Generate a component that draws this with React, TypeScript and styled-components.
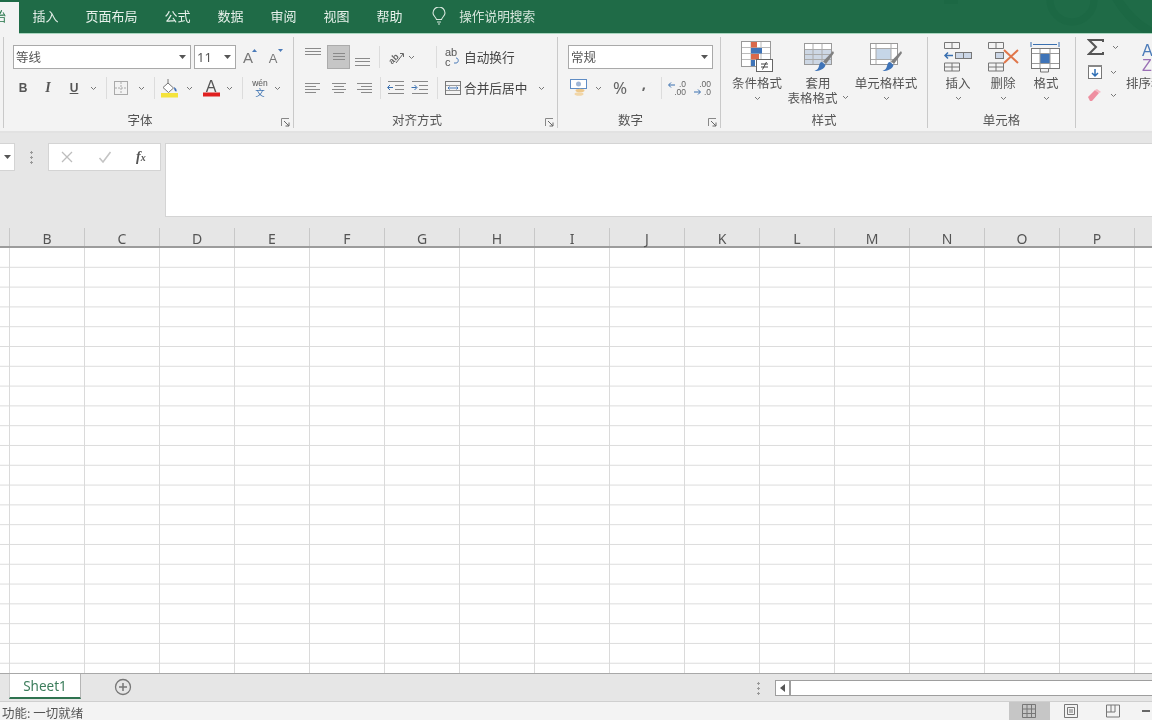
import React from 'react';
import styled, { createGlobalStyle } from 'styled-components';

const GlobalStyle = createGlobalStyle`
    html, body {
        margin: 0;
        padding: 0;
        background: #f3f3f3;
        overflow: hidden;
    }
    * {
        box-sizing: border-box;
    }
`;

const COLUMNS = ['B', 'C', 'D', 'E', 'F', 'G', 'H', 'I', 'J', 'K', 'L', 'M', 'N', 'O', 'P', 'Q'];
const TABS = ['插入', '页面布局', '公式', '数据', '审阅', '视图', '帮助'];

const Chevron = () => (
    <svg width="7" height="5" viewBox="0 0 7 5">
        <path d="M1 1l2.5 2.5L6 1" fill="none" stroke="#777" strokeWidth="1" />
    </svg>
);

const DropArrow = () => (
    <svg width="7" height="4" viewBox="0 0 7 4">
        <path d="M0 0h7L3.5 4z" fill="#555" />
    </svg>
);

const Launcher = () => (
    <svg width="10" height="10" viewBox="0 0 10 10">
        <path d="M.5 8V.5H8" fill="none" stroke="#888" />
        <path d="M3 3l5 5M8 4.500V8H4.500" fill="none" stroke="#666" />
    </svg>
);

const AlignLines = ({ rows }: { rows: Array<[number, number, number]> }) => (
    <svg width="18" height="24" viewBox="0 0 18 24">
        {rows.map(([y, x1, x2], i) => (
            <path key={i} d={`M${x1} ${y}.5H${x2}`} stroke="#8a8a8a" />
        ))}
    </svg>
);

const BorderIcon = () => (
    <svg width="16" height="16" viewBox="0 0 16 16">
        <rect x="1.500" y="1.500" width="13" height="13" fill="none" stroke="#aaa" />
        <path d="M8 2v12M2 8h12" stroke="#aaa" strokeDasharray="2 1" />
    </svg>
);

const FillIcon = () => (
    <svg width="20" height="20" viewBox="0 0 20 20">
        <path d="M8 1v5M8 5l5.500 5-5 4.500L3 9.500z" fill="#fff" stroke="#777" />
        <path d="M14 9c2 1 3 3 2.500 4.500-1 .5-2.500-1-2.500-4.500z" fill="#3f6fb5" />
        <rect x="1" y="15" width="17" height="4.500" fill="#f4e33c" />
    </svg>
);

const FontColorIcon = () => (
    <svg width="20" height="20" viewBox="0 0 20 20">
        <text x="10" y="14" textAnchor="middle" fontSize="16" fontFamily="Liberation Sans" fill="#555">A</text>
        <rect x="2" y="14.500" width="17" height="4" fill="#e02020" />
    </svg>
);

const WenIcon = () => (
    <svg width="20" height="20" viewBox="0 0 20 20">
        <text x="10" y="8" textAnchor="middle" fontSize="8.500" fontFamily="Liberation Sans" fill="#555">wén</text>
        <text x="10" y="18" textAnchor="middle" fontSize="9.500" fontFamily="Noto Sans CJK SC" fill="#3a70b0">文</text>
    </svg>
);

const GrowIcon = ({ up }: { up: boolean }) => (
    <svg width="18" height="18" viewBox="0 0 18 18">
        <text x="7" y="15" textAnchor="middle" fontSize={up ? 15 : 13} fontFamily="Liberation Sans" fill="#777">A</text>
        {up ? <path d="M11 4l2.500-3L16 4z" fill="#4a7ab8" /> : <path d="M12 1h5l-2.500 3z" fill="#4a7ab8" />}
    </svg>
);

const OrientIcon = () => (
    <svg width="18" height="18" viewBox="0 0 18 18">
        <text x="1" y="15" fontSize="9" fontFamily="Liberation Sans" fontWeight="700" fill="#666" transform="rotate(-45 5 11)">ab</text>
        <path d="M9 15L16 6M13 5.500h3.500V9" fill="none" stroke="#666" />
    </svg>
);

const WrapIcon = () => (
    <svg width="18" height="20" viewBox="0 0 18 20">
        <text x="1" y="9" fontSize="11" fontFamily="Liberation Sans" fill="#555">ab</text>
        <text x="1" y="19" fontSize="11" fontFamily="Liberation Sans" fill="#555">c</text>
        <path d="M12 11c3 0 3 5 0 5h-2" fill="none" stroke="#4a7ab8" />
    </svg>
);

const IndentIcon = ({ out }: { out: boolean }) => (
    <svg width="20" height="16" viewBox="0 0 20 16">
        <path d="M2 1.500h16M9 5.500h9M9 9.500h9M2 13.500h16" stroke="#888" />
        {out ? (
            <path d="M7 7.500H2M4 5L1.500 7.500 4 10" fill="none" stroke="#3a70b0" />
        ) : (
            <path d="M1.500 7.500h5M4.500 5L7 7.500 4.500 10" fill="none" stroke="#3a70b0" />
        )}
    </svg>
);

const MergeIcon = () => (
    <svg width="18" height="16" viewBox="0 0 18 16">
        <rect x="1.500" y="1.500" width="15" height="13" fill="none" stroke="#777" />
        <path d="M2 5.500h14M2 10.500h14" stroke="#999" />
        <path d="M4 8h10M5.500 6.500L4 8l1.500 1.500M12.500 6.500L14 8l-1.500 1.500" fill="none" stroke="#4a7ab8" />
    </svg>
);

const CurrencyIcon = () => (
    <svg width="20" height="20" viewBox="0 0 20 20">
        <rect x="1.500" y="1.500" width="16" height="9" fill="#fff" stroke="#5f8cc4" />
        <circle cx="9.500" cy="6" r="2.500" fill="#9fb6d6" />
        <ellipse cx="11" cy="12.500" rx="4.500" ry="1.800" fill="#eec88a" />
        <ellipse cx="10" cy="16" rx="4.500" ry="1.800" fill="#f1d6a8" />
    </svg>
);

const DecimalIcon = ({ inc }: { inc: boolean }) => (
    <svg width="20" height="18" viewBox="0 0 20 18">
        <text x="19" y="8" textAnchor="end" fontSize="8.500" fontFamily="Liberation Sans" fill="#666">{inc ? '.0' : '.00'}</text>
        <text x="19" y="16" textAnchor="end" fontSize="8.500" fontFamily="Liberation Sans" fill="#666">{inc ? '.00' : '.0'}</text>
        {inc ? (
            <path d="M8 6H2M4 3.500L1.500 6 4 8.500" fill="none" stroke="#3a70b0" />
        ) : (
            <path d="M2 13h6M6 10.500L8.500 13 6 15.500" fill="none" stroke="#3a70b0" />
        )}
    </svg>
);

const SigmaIcon = () => (
    <svg width="18" height="18" viewBox="0 0 18 18">
        <path d="M16 4V2H2l7 7-7 7h14v-2" fill="none" stroke="#555" strokeWidth="2" />
    </svg>
);

const FillDownIcon = () => (
    <svg width="16" height="16" viewBox="0 0 16 16">
        <rect x="1.500" y="1.500" width="13" height="13" fill="#fff" stroke="#777" />
        <rect x="1" y="1" width="14" height="2" fill="#888" />
        <path d="M8 5v7M5 9l3 3 3-3" fill="none" stroke="#2f6fb5" strokeWidth="1.500" />
    </svg>
);

const EraserIcon = () => (
    <svg width="16" height="14" viewBox="0 0 16 14">
        <path d="M1 9l7-7 4 3-7 8H3z" fill="#ee8fa0" />
        <path d="M8 2l2-1 4 3-2 1z" fill="#f4b8c2" />
    </svg>
);

const Brush = () => (
    <g>
        <path d="M31 10l1 2-8 11-3-2.500z" fill="#808080" />
        <path d="M20 21l3.500 3c-1 4-6 6-11 6 3-1 4-3 4.500-5 .5-2 1-4 3-4z" fill="#3f74b8" />
    </g>
);

const CondFormatIcon = () => (
    <svg width="32" height="32" viewBox="0 0 32 32">
        <rect x=".5" y=".5" width="29" height="25" fill="#fff" stroke="#999" />
        <path d="M10 1v24M20 1v24M1 6.500h28M1 12.500h28M1 18.500h28" stroke="#bbb" />
        <rect x="10" y="1" width="6" height="5.500" fill="#d9694a" />
        <rect x="10" y="7" width="11" height="5.500" fill="#3f74b8" />
        <rect x="10" y="13" width="8" height="5.500" fill="#d9694a" />
        <rect x="10" y="19" width="4" height="6" fill="#3f74b8" />
        <rect x="15.500" y="18.500" width="16" height="12" fill="#fff" stroke="#666" />
        <path d="M20 23h7M20 26h7M25.500 21l-4 7.500" fill="none" stroke="#444" />
    </svg>
);

const TableFormatIcon = () => (
    <svg width="32" height="32" viewBox="0 0 32 32">
        <rect x="2.500" y="2.500" width="27" height="21" fill="#fff" stroke="#999" />
        <rect x="3" y="8" width="26" height="15" fill="#cdd7e4" />
        <path d="M11 3v20M20 3v20M3 8.500h26M3 13.500h26M3 18.500h26" stroke="#aaa" />
        <Brush />
    </svg>
);

const CellStyleIcon = () => (
    <svg width="32" height="32" viewBox="0 0 32 32">
        <rect x=".5" y="2.500" width="27" height="21" fill="#fff" stroke="#999" />
        <rect x="6" y="7" width="15" height="12" fill="#c6d6e8" />
        <path d="M6 3v20M21 3v20M1 7.500h26M1 18.500h26" stroke="#aaa" />
        <Brush />
    </svg>
);

const InsertCellIcon = () => (
    <svg width="32" height="32" viewBox="0 0 32 32">
        <path d="M2.500 1.500h15v6h-15zM10 2v5M2.500 22h15v8h-15zM10 22v8M3 26h14" fill="none" stroke="#777" />
        <rect x="13.500" y="11.500" width="16" height="6" fill="#cbd6e6" stroke="#777" />
        <path d="M21.500 12v5" stroke="#777" />
        <path d="M11 14.500H3M6 11.500l-3 3 3 3" fill="none" stroke="#3a70b0" strokeWidth="1.500" />
    </svg>
);

const DeleteCellIcon = () => (
    <svg width="32" height="32" viewBox="0 0 32 32">
        <path d="M1.500 1.500h15v6h-15zM9 2v5M1.500 22h15v8h-15zM9 22v8M2 26h14" fill="none" stroke="#777" />
        <rect x="8.500" y="11.500" width="8" height="6" fill="#cbd6e6" stroke="#777" />
        <path d="M17 9l14 13M31 9L17 22" stroke="#e0764a" strokeWidth="2" />
    </svg>
);

const FormatCellIcon = () => (
    <svg width="32" height="32" viewBox="0 0 32 32">
        <path d="M1 1v5M29 1v5M3 3.500h24" fill="none" stroke="#3a70b0" />
        <rect x="1.500" y="7.500" width="28" height="20" fill="#fff" stroke="#777" />
        <rect x="10" y="12" width="10" height="11" fill="#3f74b8" />
        <path d="M10 8v19M20 8v19M2 12.500h27M2 22.500h27" stroke="#999" />
        <path d="M10.500 28v3h8v-3" fill="none" stroke="#777" />
    </svg>
);

const SortIcon = () => (
    <svg width="24" height="32" viewBox="0 0 24 32">
        <text x="0" y="15" fontSize="16" fontFamily="Liberation Sans" fill="#4a7ab8">A</text>
        <text x="0" y="30" fontSize="16" fontFamily="Liberation Sans" fill="#9a6fb5">Z</text>
    </svg>
);

const BulbIcon = () => (
    <svg width="14" height="18" viewBox="0 0 14 18">
        <path d="M4.500 12.500C4 10 1 9 1 6a6 6 0 0112 0c0 3-3 4-3.500 6.500zM5 15h4M6 17h2" fill="none" stroke="#d8e8de" strokeWidth="1.100" />
    </svg>
);

const Watermark = () => (
    <WatermarkSvg width="240" height="33" viewBox="0 0 240 33">
        <circle cx="160" cy="0" r="22" fill="none" stroke="#1c6844" strokeWidth="7" />
        <path d="M200 -10c10 20 25 35 40 43" fill="none" stroke="#1c6844" strokeWidth="9" />
        <rect x="32" y="-4" width="14" height="8" fill="#1c6844" />
    </WatermarkSvg>
);

const App = () => {
    return (
        <Page>
            <GlobalStyle />

            <TopBar>
                <ActiveTab>开始</ActiveTab>
                {TABS.map((tab) => (
                    <TopTab key={tab}>{tab}</TopTab>
                ))}
                <SearchHint>
                    <BulbIcon />
                    <span>操作说明搜索</span>
                </SearchHint>
                <Watermark />
            </TopBar>

            <Ribbon>
                <LeftEdge />

                <Group $w={290}>
                    <GroupBody $pl={9}>
                        <ToolRow>
                            <SelectBox $w={178}>
                                等线
                                <DropArrow />
                            </SelectBox>
                            <SelectBox $w={42} $ml={3}>
                                <SizeText>11</SizeText>
                                <DropArrow />
                            </SelectBox>
                            <Slot $w={20} $ml={4}>
                                <GrowIcon up />
                            </Slot>
                            <Slot $w={20} $ml={5}>
                                <GrowIcon up={false} />
                            </Slot>
                        </ToolRow>
                        <ToolRow>
                            <Slot $w={20}>
                                <BoldGlyph>B</BoldGlyph>
                            </Slot>
                            <Slot $w={20} $ml={5}>
                                <ItalicGlyph>I</ItalicGlyph>
                            </Slot>
                            <Slot $w={20} $ml={6}>
                                <UnderGlyph>U</UnderGlyph>
                            </Slot>
                            <Slot $w={10} $ml={4}>
                                <Chevron />
                            </Slot>
                            <RowDivider $ml={8} />
                            <Slot $w={20} $ml={4}>
                                <BorderIcon />
                            </Slot>
                            <Slot $w={10} $ml={5}>
                                <Chevron />
                            </Slot>
                            <RowDivider $ml={8} />
                            <Slot $w={20} $ml={5}>
                                <FillIcon />
                            </Slot>
                            <Slot $w={10} $ml={4}>
                                <Chevron />
                            </Slot>
                            <Slot $w={20} $ml={7}>
                                <FontColorIcon />
                            </Slot>
                            <Slot $w={10} $ml={3}>
                                <Chevron />
                            </Slot>
                            <RowDivider $ml={8} />
                            <Slot $w={20} $ml={7}>
                                <WenIcon />
                            </Slot>
                            <Slot $w={10} $ml={2}>
                                <Chevron />
                            </Slot>
                        </ToolRow>
                    </GroupBody>
                    <GroupLabel $pr={17}>字体</GroupLabel>
                    <LauncherSpot>
                        <Launcher />
                    </LauncherSpot>
                </Group>

                <Group $w={264}>
                    <GroupBody $pl={10}>
                        <ToolRow>
                            <Slot $w={18}>
                                <AlignLines rows={[[3, 1, 17], [6, 1, 17], [9, 1, 17]]} />
                            </Slot>
                            <ActiveSlot $ml={5}>
                                <AlignLines rows={[[8, 3, 15], [11, 3, 15], [14, 3, 15]]} />
                            </ActiveSlot>
                            <Slot $w={18} $ml={4}>
                                <AlignLines rows={[[13, 1, 16], [16, 1, 16], [20, 1, 16]]} />
                            </Slot>
                            <RowDivider $ml={7} />
                            <Slot $w={18} $ml={7}>
                                <OrientIcon />
                            </Slot>
                            <Slot $w={10} $ml={1}>
                                <Chevron />
                            </Slot>
                            <RowDivider $ml={20} />
                            <Slot $w={18} $ml={7}>
                                <WrapIcon />
                            </Slot>
                            <ToolText $ml={2}>自动换行</ToolText>
                        </ToolRow>
                        <ToolRow>
                            <Slot $w={18}>
                                <AlignLines rows={[[7, 1, 16], [10, 1, 12], [13, 1, 16], [16, 1, 12]]} />
                            </Slot>
                            <Slot $w={18} $ml={8}>
                                <AlignLines rows={[[7, 2, 16], [10, 4, 14], [13, 2, 16], [16, 4, 14]]} />
                            </Slot>
                            <Slot $w={18} $ml={7}>
                                <AlignLines rows={[[7, 2, 17], [10, 6, 17], [13, 2, 17], [16, 6, 17]]} />
                            </Slot>
                            <RowDivider $ml={7} />
                            <Slot $w={20} $ml={5}>
                                <IndentIcon out />
                            </Slot>
                            <Slot $w={20} $ml={4}>
                                <IndentIcon out={false} />
                            </Slot>
                            <RowDivider $ml={7} />
                            <Slot $w={18} $ml={6}>
                                <MergeIcon />
                            </Slot>
                            <ToolText $ml={2}>合并后居中</ToolText>
                            <Slot $w={10} $ml={9}>
                                <Chevron />
                            </Slot>
                        </ToolRow>
                    </GroupBody>
                    <GroupLabel $pr={17}>对齐方式</GroupLabel>
                    <LauncherSpot>
                        <Launcher />
                    </LauncherSpot>
                </Group>

                <Group $w={163}>
                    <GroupBody $pl={10}>
                        <ToolRow>
                            <SelectBox $w={145}>
                                常规
                                <DropArrow />
                            </SelectBox>
                        </ToolRow>
                        <ToolRow>
                            <Slot $w={20} $ml={1}>
                                <CurrencyIcon />
                            </Slot>
                            <Slot $w={10} $ml={4}>
                                <Chevron />
                            </Slot>
                            <PercentGlyph $ml={7}>%</PercentGlyph>
                            <CommaGlyph $ml={4}>,</CommaGlyph>
                            <RowDivider $ml={7} />
                            <Slot $w={20} $ml={5}>
                                <DecimalIcon inc />
                            </Slot>
                            <Slot $w={20} $ml={5}>
                                <DecimalIcon inc={false} />
                            </Slot>
                        </ToolRow>
                    </GroupBody>
                    <GroupLabel $pr={17}>数字</GroupLabel>
                    <LauncherSpot>
                        <Launcher />
                    </LauncherSpot>
                </Group>

                <Group $w={207}>
                    <BigRow $pl={5}>
                        <BigButton $w={62}>
                            <CondFormatIcon />
                            <BigText>条件格式</BigText>
                            <Chevron />
                        </BigButton>
                        <BigButton $w={60}>
                            <TableFormatIcon />
                            <BigText>套用</BigText>
                            <BigText>
                                表格格式 <Chevron />
                            </BigText>
                        </BigButton>
                        <BigButton $w={76}>
                            <CellStyleIcon />
                            <BigText>单元格样式</BigText>
                            <Chevron />
                        </BigButton>
                    </BigRow>
                    <GroupLabel>样式</GroupLabel>
                </Group>

                <Group $w={148}>
                    <BigRow $pl={8}>
                        <BigButton $w={44}>
                            <InsertCellIcon />
                            <BigText>插入</BigText>
                            <Chevron />
                        </BigButton>
                        <BigButton $w={46}>
                            <DeleteCellIcon />
                            <BigText>删除</BigText>
                            <Chevron />
                        </BigButton>
                        <BigButton $w={40}>
                            <FormatCellIcon />
                            <BigText>格式</BigText>
                            <Chevron />
                        </BigButton>
                    </BigRow>
                    <GroupLabel>单元格</GroupLabel>
                </Group>

                <EditGroup>
                    <EditStack>
                        <EditRow>
                            <SigmaIcon />
                            <Chevron />
                        </EditRow>
                        <EditRow>
                            <FillDownIcon />
                            <Chevron />
                        </EditRow>
                        <EditRow>
                            <EraserIcon />
                            <Chevron />
                        </EditRow>
                    </EditStack>
                    <SortButton>
                        <SortIcon />
                        <BigText>排序和筛选</BigText>
                    </SortButton>
                </EditGroup>
            </Ribbon>

            <FormulaBar>
                <NameBox>
                    <DropArrow />
                </NameBox>
                <GripDots />
                <FormulaTools>
                    <svg width="14" height="14" viewBox="0 0 14 14">
                        <path d="M2 2l10 10M12 2L2 12" stroke="#bdbdbd" strokeWidth="1.300" />
                    </svg>
                    <svg width="14" height="14" viewBox="0 0 14 14">
                        <path d="M1.500 8l3.500 4 7.500-10" fill="none" stroke="#c4c4c4" strokeWidth="1.600" />
                    </svg>
                    <FxGlyph>
                        f<sub>x</sub>
                    </FxGlyph>
                </FormulaTools>
                <FormulaInput />
            </FormulaBar>

            <ColumnHeader>
                <Corner />
                {COLUMNS.map((col) => (
                    <ColumnCell key={col}>{col}</ColumnCell>
                ))}
            </ColumnHeader>

            <SheetGrid />

            <TabBar>
                <SheetTab>Sheet1</SheetTab>
                <AddSheet>
                    <svg width="18" height="18" viewBox="0 0 18 18">
                        <circle cx="9" cy="9" r="7.500" fill="none" stroke="#777" strokeWidth="1.300" />
                        <path d="M5 9h8M9 5v8" stroke="#777" strokeWidth="1.500" />
                    </svg>
                </AddSheet>
                <TabSpacer />
                <GripDots />
                <ScrollTrack>
                    <ScrollButton>
                        <svg width="6" height="8" viewBox="0 0 6 8">
                            <path d="M5 0v8L0 4z" fill="#555" />
                        </svg>
                    </ScrollButton>
                </ScrollTrack>
            </TabBar>

            <StatusBar>
                <StatusText>功能: 一切就绪</StatusText>
                <ViewButton $active>
                    <svg width="14" height="14" viewBox="0 0 14 14">
                        <path d="M.5.500h13v13H.5zM5 1v12M9.500 1v12M1 5h12M1 9.500h12" fill="none" stroke="#777" />
                    </svg>
                </ViewButton>
                <ViewButton>
                    <svg width="14" height="14" viewBox="0 0 14 14">
                        <path d="M.5.500h13v13H.5zM3.500 3.500h7v7h-7zM5 6h4M5 8h4" fill="none" stroke="#777" />
                    </svg>
                </ViewButton>
                <ViewButton>
                    <svg width="14" height="14" viewBox="0 0 14 14">
                        <path d="M.5 1h13v12H.5zM5 1v7h4V1M5 8H1" fill="none" stroke="#777" />
                    </svg>
                </ViewButton>
                <ZoomMinus />
            </StatusBar>
        </Page>
    );
};

export default App;

const Page = styled.div`
    width: 1152px;
    height: 720px;
    display: flex;
    flex-direction: column;
    overflow: hidden;
    background: #f3f3f3;
    color: #444;
    font-family: 'Noto Sans CJK SC', 'Noto Sans', sans-serif;
    font-size: 12.5px;
    filter: blur(0.35px);
`;

const TopBar = styled.div`
    position: relative;
    height: 34px;
    flex: none;
    display: flex;
    align-items: flex-end;
    background: #1f6b47;
    border-bottom: 1px solid #a9d6bf;
`;

const TopTab = styled.div`
    height: 31px;
    padding: 0 13.5px 3px;
    display: flex;
    align-items: center;
    color: #e6f0ea;
    font-size: 13px;
    line-height: 16px;
    white-space: nowrap;
`;

const ActiveTab = styled(TopTab)`
    margin-left: -33px;
    margin-bottom: -1px;
    height: 32px;
    padding: 0 13px 4px;
    background: #f3f3f3;
    color: #217346;
`;

const SearchHint = styled(TopTab)`
    margin-left: 7px;
    gap: 13px;
    padding: 0 0 3px 9px;
    font-size: 12.7px;
    color: #d6e6dc;
`;

const WatermarkSvg = styled.svg`
    position: absolute;
    top: 0;
    right: 0;
`;

const Ribbon = styled.div`
    height: 97px;
    flex: none;
    display: flex;
    background: #f3f3f3;
`;

const LeftEdge = styled.div`
    width: 4px;
    flex: none;
    margin: 3px 0;
    border-right: 1px solid #c9c9c9;
`;

const Group = styled.div<{ $w: number }>`
    position: relative;
    width: ${(p) => p.$w}px;
    flex: none;
    display: flex;
    flex-direction: column;
    margin: 3px 0;
    border-right: 1px solid #c9c9c9;
`;

const GroupBody = styled.div<{ $pl: number }>`
    flex: 1;
    display: flex;
    flex-direction: column;
    gap: 7px;
    padding: 8px 0 0 ${(p) => p.$pl}px;
`;

const BigRow = styled.div<{ $pl: number }>`
    flex: 1;
    display: flex;
    padding: 4px 0 0 ${(p) => p.$pl}px;
`;

const GroupLabel = styled.div<{ $pr?: number }>`
    height: 17px;
    padding-right: ${(p) => p.$pr || 0}px;
    text-align: center;
    font-size: 12.5px;
    line-height: 17px;
    color: #555;
`;

const LauncherSpot = styled.div`
    position: absolute;
    right: 2px;
    bottom: 0;
    display: flex;
`;

const ToolRow = styled.div`
    height: 24px;
    display: flex;
    align-items: center;
`;

const Slot = styled.div<{ $w: number; $ml?: number }>`
    width: ${(p) => p.$w}px;
    height: 24px;
    flex: none;
    margin-left: ${(p) => p.$ml || 0}px;
    display: flex;
    align-items: center;
    justify-content: center;
`;

const ActiveSlot = styled.div<{ $ml: number }>`
    width: 23px;
    height: 24px;
    flex: none;
    margin-left: ${(p) => p.$ml}px;
    display: flex;
    align-items: center;
    justify-content: center;
    background: #c6c6c6;
    border: 1px solid #ababab;
`;

const SelectBox = styled.div<{ $w: number; $ml?: number }>`
    width: ${(p) => p.$w}px;
    height: 24px;
    flex: none;
    margin-left: ${(p) => p.$ml || 0}px;
    padding: 0 4px 0 2px;
    display: flex;
    align-items: center;
    justify-content: space-between;
    background: #fff;
    border: 1px solid #a9a9a9;
    color: #555;
    font-size: 12.5px;
    line-height: 16px;
`;

const SizeText = styled.span`
    font-family: 'Noto Sans', sans-serif;
    font-size: 13px;
`;

const RowDivider = styled.div<{ $ml: number }>`
    width: 1px;
    height: 22px;
    flex: none;
    margin-left: ${(p) => p.$ml}px;
    background: #dcdcdc;
`;

const BoldGlyph = styled.span`
    font-family: 'Liberation Sans', sans-serif;
    font-size: 12px;
    font-weight: 700;
    color: #555;
`;

const ItalicGlyph = styled(BoldGlyph)`
    font-family: 'Liberation Serif', serif;
    font-size: 14px;
    font-style: italic;
`;

const UnderGlyph = styled(BoldGlyph)`
    text-decoration: underline;
`;

const ToolText = styled.span<{ $ml: number }>`
    margin-left: ${(p) => p.$ml}px;
    font-size: 12.7px;
    line-height: 16px;
    white-space: nowrap;
`;

const PercentGlyph = styled.span<{ $ml: number }>`
    width: 20px;
    flex: none;
    margin-left: ${(p) => p.$ml}px;
    text-align: center;
    font-family: 'Noto Sans', sans-serif;
    font-size: 17px;
    line-height: 20px;
    color: #666;
`;

const CommaGlyph = styled(PercentGlyph)`
    padding-bottom: 10px;
    font-weight: 700;
    font-size: 15px;
`;

const BigButton = styled.div<{ $w: number }>`
    width: ${(p) => p.$w}px;
    flex: none;
    display: flex;
    flex-direction: column;
    align-items: center;
`;

const BigText = styled.div`
    height: 15px;
    display: flex;
    align-items: center;
    gap: 4px;
    font-size: 12.5px;
    line-height: 15px;
    white-space: nowrap;
    color: #555;

    & + svg {
        margin-top: 6px;
    }
    svg + & {
        margin-top: 2px;
    }
`;

const EditGroup = styled.div`
    flex: none;
    display: flex;
    padding-top: 3px;
`;

const EditStack = styled.div`
    width: 50px;
    padding: 1px 0 0 11px;
    display: flex;
    flex-direction: column;
    gap: 5px;
`;

const EditRow = styled.div`
    height: 18px;
    display: flex;
    align-items: center;
    gap: 7px;

    &:first-child {
        margin-bottom: 2px;
    }
`;

const SortButton = styled.div`
    margin-top: 4px;
    display: flex;
    flex-direction: column;
    align-items: flex-start;

    & > svg {
        margin-left: 16px;
    }
`;

const FormulaBar = styled.div`
    height: 97px;
    flex: none;
    display: flex;
    align-items: flex-start;
    padding-top: 10px;
    background: #e6e6e6;
    border-top: 2px solid #e2e2e2;
`;

const NameBox = styled.div`
    width: 15px;
    height: 28px;
    flex: none;
    display: flex;
    align-items: center;
    justify-content: center;
    background: #fff;
    border: 1px solid #d4d4d4;
    border-left: none;
`;

const GripDots = styled.div`
    width: 33px;
    height: 14px;
    flex: none;
    margin-top: 7px;
    background-image: radial-gradient(circle at center, #999 1px, transparent 1.300px);
    background-size: 33px 5px;
`;

const FormulaTools = styled.div`
    width: 113px;
    height: 28px;
    flex: none;
    display: flex;
    align-items: center;
    gap: 24px;
    padding: 0 11px;
    background: #fff;
    border: 1px solid #d4d4d4;
`;

const FxGlyph = styled.span`
    font-family: 'Liberation Serif', serif;
    font-style: italic;
    font-weight: 700;
    font-size: 14px;
    color: #555;

    sub {
        font-size: 10px;
        vertical-align: baseline;
    }
`;

const FormulaInput = styled.div`
    flex: 1;
    height: 74px;
    margin-left: 4px;
    background: #fff;
    border: 1px solid #d4d4d4;
    border-right: none;
`;

const ColumnHeader = styled.div`
    height: 20px;
    flex: none;
    display: flex;
    background: #e6e6e6;
    border-bottom: 2px solid #9c9c9c;
`;

const Corner = styled.div`
    width: 9px;
    flex: none;
`;

const ColumnCell = styled.div`
    width: 75px;
    flex: none;
    display: flex;
    align-items: center;
    justify-content: center;
    padding-top: 3px;
    border-left: 1px solid #c8c8c8;
    font-family: 'Noto Sans', sans-serif;
    font-size: 14px;
    line-height: 18px;
    color: #555;
`;

const SheetGrid = styled.div`
    flex: 1;
    background-color: #fff;
    background-image: linear-gradient(to right, #dadada 1px, transparent 1px),
        linear-gradient(to bottom, transparent 18.800px, #dcdcdc 18.800px);
    background-size: 75px 100%, 100% 19.800px;
    background-position: 9px 0, 0 0;
`;

const TabBar = styled.div`
    height: 29px;
    flex: none;
    display: flex;
    align-items: flex-start;
    background: #e6e6e6;
    border-top: 1px solid #a8a8a8;
    border-bottom: 1px solid #cfcfcf;
`;

const SheetTab = styled.div`
    width: 72px;
    height: 25px;
    flex: none;
    margin-left: 9px;
    display: flex;
    align-items: center;
    justify-content: center;
    background: #fff;
    border-right: 1px solid #b5b5b5;
    border-left: 1px solid #d0d0d0;
    border-bottom: 2px solid #2f7350;
    color: #3c7d5c;
    font-family: 'Noto Sans', sans-serif;
    font-size: 13.5px;
    line-height: 18px;
`;

const AddSheet = styled.div`
    margin: 4px 0 0 33px;
    display: flex;
`;

const TabSpacer = styled.div`
    flex: 1;
`;

const ScrollTrack = styled.div`
    width: 377px;
    height: 16px;
    flex: none;
    margin: 6px 0 0 0;
    background: #fff;
    border: 1px solid #9e9e9e;
    border-right: none;
`;

const ScrollButton = styled.div`
    width: 15px;
    height: 100%;
    display: flex;
    align-items: center;
    justify-content: center;
    border-right: 2px solid #9e9e9e;
`;

const StatusBar = styled.div`
    height: 18px;
    flex: none;
    display: flex;
    align-items: stretch;
    background: #f3f3f3;
`;

const StatusText = styled.div`
    width: 1009px;
    flex: none;
    padding: 2px 0 0 2px;
    font-size: 12.5px;
    line-height: 18px;
    color: #555;
`;

const ViewButton = styled.div<{ $active?: boolean }>`
    width: 41px;
    flex: none;
    margin-right: 1px;
    padding-right: 2px;
    display: flex;
    align-items: center;
    justify-content: center;
    background: ${(p) => (p.$active ? '#c6c6c6' : 'transparent')};
`;

const ZoomMinus = styled.div`
    width: 8px;
    height: 2px;
    flex: none;
    align-self: center;
    margin-left: 7px;
    background: #666;
`;
